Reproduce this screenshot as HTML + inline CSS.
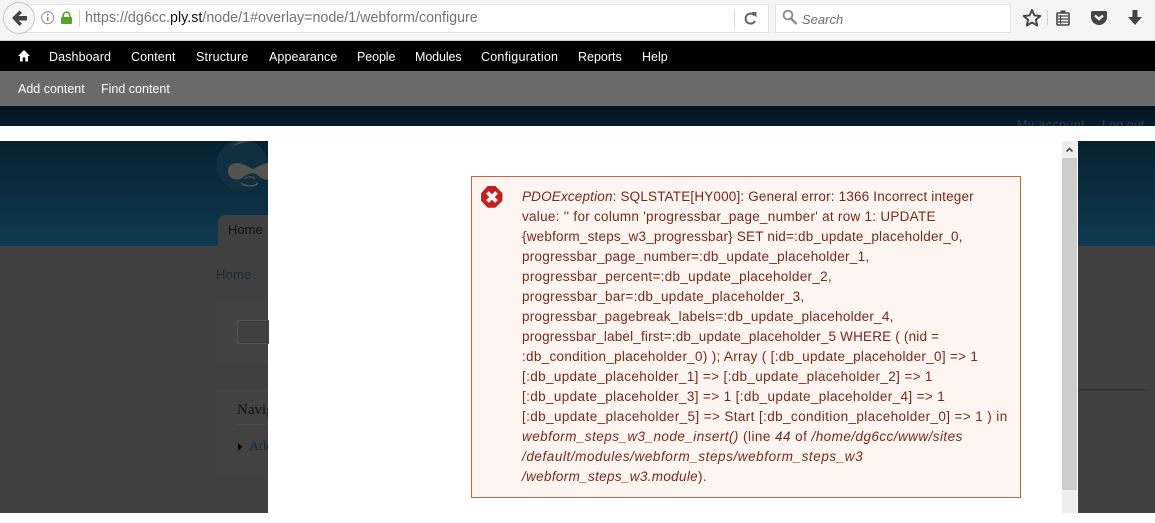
<!DOCTYPE html>
<html>
<head>
<meta charset="utf-8">
<style>
html,body{margin:0;padding:0;background:#fff;}
#p{position:relative;width:1155px;height:523px;overflow:hidden;background:#fff;font-family:"Liberation Sans",sans-serif;}
.a{position:absolute;}
.t{position:absolute;white-space:nowrap;}
.nav{font-size:12.5px;color:#fff;line-height:16px;top:49px;}
.sub{font-size:12.5px;color:#fff;line-height:16px;top:81px;}
.l{position:absolute;left:522px;white-space:nowrap;font-size:13.5px;line-height:20px;color:#76291a;}
.l i{font-style:italic;}
</style>
</head>
<body>
<div id="p">
<!-- browser chrome -->
<div class="a" style="left:0;top:0;width:1155px;height:40px;background:#f5f5f5;"></div>
<div class="a" style="left:0;top:40px;width:1155px;height:1px;background:#ccc;"></div>
<div class="a" style="left:20px;top:4px;width:747px;height:27px;background:#fff;border:1px solid #e2e2e2;"></div>
<div class="a" style="left:3px;top:2px;width:30px;height:30px;border-radius:50%;background:#f6f6f6;border:1px solid #c6c6c6;"></div>
<svg class="a" style="left:0;top:0" width="90" height="40">
<path d="M12 18 L19.500 10.500 L22 13 L18.500 16 L27 16 L27 20.500 L18.500 20.500 L22 23.500 L19.500 26 Z" fill="#444"/>
<circle cx="47.700" cy="17.700" r="6" fill="none" stroke="#999" stroke-width="1.100"/>
<rect x="47" y="16.700" width="1.500" height="4.300" fill="#888"/><rect x="47" y="14" width="1.500" height="1.600" fill="#888"/>
<path d="M63.200 17 V15.500 a3.300 3.300 0 0 1 6.600 0 V17" fill="none" stroke="#57a32a" stroke-width="1.700"/>
<rect x="61" y="17" width="11" height="7" rx="1" fill="#57a32a"/>
<rect x="79" y="9" width="1" height="18" fill="#d4d4d4"/>
</svg>
<div class="t" style="left:85px;top:10px;font-size:14.3px;line-height:17px;color:#737373;">https://dg6cc.<span style="color:#111">ply.st</span>/node/1#overlay=node/1/webform/configure</div>
<div class="a" style="left:734px;top:9px;width:1px;height:18px;background:#d8d8d8;"></div>
<svg class="a" style="left:740px;top:8px" width="22" height="22">
<path d="M14.500 7.500 A5 5 0 1 0 15 13" fill="none" stroke="#666" stroke-width="2"/>
<path d="M11.500 4 L16.500 4 L16.500 9.500 Z" fill="#666"/>
</svg>
<div class="a" style="left:775px;top:4px;width:234px;height:27px;background:#fff;border:1px solid #e2e2e2;"></div>
<svg class="a" style="left:780px;top:8px" width="20" height="20">
<circle cx="8" cy="7" r="4.400" fill="none" stroke="#8a8a8a" stroke-width="1.800"/>
<path d="M11 10.500 L16.500 16" stroke="#8a8a8a" stroke-width="2.400"/>
</svg>
<div class="t" style="left:802px;top:11px;font-size:13px;line-height:17px;font-style:italic;color:#6e6e6e;">Search</div>
<svg class="a" style="left:1020px;top:5px" width="135" height="30">
<path d="M12 5 L14.400 10.400 L20.300 11 L15.900 14.800 L17.200 20.500 L12 17.500 L6.800 20.500 L8.100 14.800 L3.700 11 L9.600 10.400 Z" fill="none" stroke="#444" stroke-width="1.900" stroke-linejoin="round"/>
<rect x="27" y="5" width="1" height="15" fill="#d4d4d4"/>
<rect x="37" y="8" width="12" height="12" rx="1" fill="none" stroke="#444" stroke-width="1.600"/>
<rect x="40.500" y="5.500" width="5" height="3" fill="#444"/>
<path d="M38 11 H48 M38 14 H48 M38 17 H48" stroke="#444" stroke-width="1.200"/>
<path d="M40.500 10 V19" stroke="#444" stroke-width="1"/>
<path d="M72.500 6 H85.500 a1.500 1.500 0 0 1 1.500 1.500 V12 a8 8 0 0 1 -16 0 V7.500 a1.500 1.500 0 0 1 1.500 -1.500 Z" fill="#444"/>
<path d="M75 10.500 L79 14 L83 10.500" fill="none" stroke="#f5f5f5" stroke-width="2.400"/>
<path d="M112.500 5 H117.500 V12 H122 L115 20 L108 12 H112.500 Z" fill="#444"/>
</svg>
<!-- toolbar -->
<div class="a" style="left:0;top:41px;width:1155px;height:30px;background:#000;"></div>
<svg class="a" style="left:17px;top:49px" width="14" height="14">
<path d="M7 1 L13 7 H11 V12.500 H8.300 V8.500 H5.700 V12.500 H3 V7 H1 Z" fill="#fff"/>
</svg>
<div class="t nav" style="left:49px;letter-spacing:.1px;">Dashboard</div>
<div class="t nav" style="left:131px;letter-spacing:.1px;">Content</div>
<div class="t nav" style="left:196px;letter-spacing:.2px;">Structure</div>
<div class="t nav" style="left:269px;letter-spacing:.1px;">Appearance</div>
<div class="t nav" style="left:357px;letter-spacing:-.1px;">People</div>
<div class="t nav" style="left:415px;letter-spacing:-.1px;">Modules</div>
<div class="t nav" style="left:481px;letter-spacing:.22px;">Configuration</div>
<div class="t nav" style="left:578px;">Reports</div>
<div class="t nav" style="left:642px;">Help</div>
<div class="a" style="left:0;top:71px;width:1155px;height:35px;background:#6a6a6a;"></div>
<div class="t sub" style="left:18px;">Add content</div>
<div class="t sub" style="left:101px;">Find content</div>
<!-- page behind -->
<div class="a" style="left:0;top:106px;width:1155px;height:20px;background:linear-gradient(#04121b,#06202f);"></div>
<div class="t" style="left:1017px;top:117px;font-size:12.5px;line-height:16px;letter-spacing:.4px;color:#2f3c44;">My account</div>
<div class="t" style="left:1102px;top:117px;font-size:12.5px;line-height:16px;letter-spacing:.1px;color:#2f3c44;">Log out</div>
<div class="a" style="left:0;top:126px;width:1155px;height:15px;background:#fdfdfe;"></div>
<div class="a" style="left:0;top:141px;width:268px;height:105px;background:linear-gradient(#07212f,#0f3a52);"></div>
<div class="a" style="left:1078px;top:141px;width:77px;height:105px;background:linear-gradient(#07212f,#0f3a52);"></div>
<div class="a" style="left:0;top:246px;width:268px;height:267px;background:#404040;"></div>
<div class="a" style="left:1078px;top:246px;width:77px;height:267px;background:#404040;"></div>
<div class="a" style="left:1078px;top:389px;width:68px;height:1px;background:#2e2e2e;"></div>
<!-- logo -->
<svg class="a" style="left:210px;top:141px" width="58" height="52">
<circle cx="32" cy="24" r="25.500" fill="#11303f"/>
<path d="M22 5 C25 3 28 1 30 0 L40 0 C34 1 28 4 22 5 Z" fill="#4d4743"/>
<path d="M18 30 C18 25 22 22 27 22 C33 22 38 26 43 28 C48 26 52 23 58 22 V39 C53 39 50 36 46 33 C42 31 37 33 33 36 C30 39 27 39 24 38 C20 37 18 34 18 30 Z" fill="#555250"/>
<path d="M31 42 C36 46 44 46 48 42" fill="none" stroke="#605c5a" stroke-width="1.300"/>
<path d="M35 38 C38 35 42 35 45 38" fill="none" stroke="#605c5a" stroke-width="1"/>
</svg>
<div class="a" style="left:218px;top:215px;width:50px;height:31px;background:#404040;border-radius:8px 0 0 0;"></div>
<div class="t" style="left:228px;top:222px;font-size:13px;line-height:16px;color:#121212;">Home</div>
<div class="t" style="left:216px;top:267px;font-size:13px;line-height:16px;letter-spacing:.2px;color:#172b3a;">Home</div>
<div class="a" style="left:216px;top:303px;width:52px;height:61px;background:#424242;"></div>
<div class="a" style="left:237px;top:320px;width:31px;height:22px;border:1px solid #555;border-right:0;background:#404040;"></div>
<div class="a" style="left:216px;top:389px;width:52px;height:85px;background:#424242;"></div>
<div class="t" style="left:237px;top:401px;font-family:'Liberation Serif',serif;font-size:15px;line-height:18px;color:#111;width:31px;overflow:hidden;">Navigation</div>
<div class="a" style="left:237px;top:424px;width:31px;height:1px;background:#4a4a4a;"></div>
<div class="a" style="left:238px;top:443px;width:0;height:0;border-left:4px solid #000;border-top:4px solid transparent;border-bottom:4px solid transparent;"></div>
<div class="t" style="left:249px;top:438px;font-family:'Liberation Serif',serif;font-size:14px;line-height:17px;color:#172b3a;width:19px;overflow:hidden;">Add content</div>
<!-- scrollbar -->
<div class="a" style="left:1062px;top:141px;width:15px;height:372px;background:#eee;"></div>
<div class="a" style="left:1062px;top:158px;width:15px;height:332px;background:#cdcdcd;"></div>
<svg class="a" style="left:1062px;top:141px" width="15" height="17">
<path d="M4.500 10.500 L7.500 7.500 L10.500 10.500" fill="none" stroke="#505050" stroke-width="1.700"/>
</svg>
<!-- message -->
<div class="a" style="left:471px;top:176px;width:548px;height:320px;background:#fef5f1;border:1px solid #c2673f;"></div>
<svg class="a" style="left:480px;top:185px" width="24" height="24">
<path d="M8 1.800 H15 L21.700 8.500 V15.500 L15 22 H8 L1.800 15.500 V8.500 Z" fill="#c02020" stroke="#c02020" stroke-width="1.500" stroke-linejoin="round"/>
<path d="M7.500 7.500 L16.500 16.500 M16.500 7.500 L7.500 16.500" stroke="#fdf4f2" stroke-width="3.800"/>
</svg>
<div class="l" style="top:187px;letter-spacing:.174px;"><i>PDOException</i>: SQLSTATE[HY000]: General error: 1366 Incorrect integer</div>
<div class="l" style="top:207px;letter-spacing:.274px;">value: '' for column 'progressbar_page_number' at row 1: UPDATE</div>
<div class="l" style="top:227px;letter-spacing:.2px;">{webform_steps_w3_progressbar} SET nid=:db_update_placeholder_0,</div>
<div class="l" style="top:247px;letter-spacing:.265px;">progressbar_page_number=:db_update_placeholder_1,</div>
<div class="l" style="top:267px;letter-spacing:.31px;">progressbar_percent=:db_update_placeholder_2,</div>
<div class="l" style="top:287px;letter-spacing:.29px;">progressbar_bar=:db_update_placeholder_3,</div>
<div class="l" style="top:307px;letter-spacing:.26px;">progressbar_pagebreak_labels=:db_update_placeholder_4,</div>
<div class="l" style="top:327px;letter-spacing:.19px;">progressbar_label_first=:db_update_placeholder_5 WHERE ( (nid =</div>
<div class="l" style="top:347px;letter-spacing:.305px;">:db_condition_placeholder_0) ); Array ( [:db_update_placeholder_0] =&gt; 1</div>
<div class="l" style="top:367px;letter-spacing:.36px;">[:db_update_placeholder_1] =&gt; [:db_update_placeholder_2] =&gt; 1</div>
<div class="l" style="top:387px;letter-spacing:.365px;">[:db_update_placeholder_3] =&gt; 1 [:db_update_placeholder_4] =&gt; 1</div>
<div class="l" style="top:407px;letter-spacing:.39px;">[:db_update_placeholder_5] =&gt; Start [:db_condition_placeholder_0] =&gt; 1 ) in</div>
<div class="l" style="top:427px;letter-spacing:.45px;"><i>webform_steps_w3_node_insert()</i> (line <i>44</i> of <i>/home/dg6cc/www/sites</i></div>
<div class="l" style="top:447px;letter-spacing:.57px;"><i>/default/modules/webform_steps/webform_steps_w3</i></div>
<div class="l" style="top:467px;letter-spacing:.33px;"><i>/webform_steps_w3.module</i>).</div>
</div>
</body>
</html>
